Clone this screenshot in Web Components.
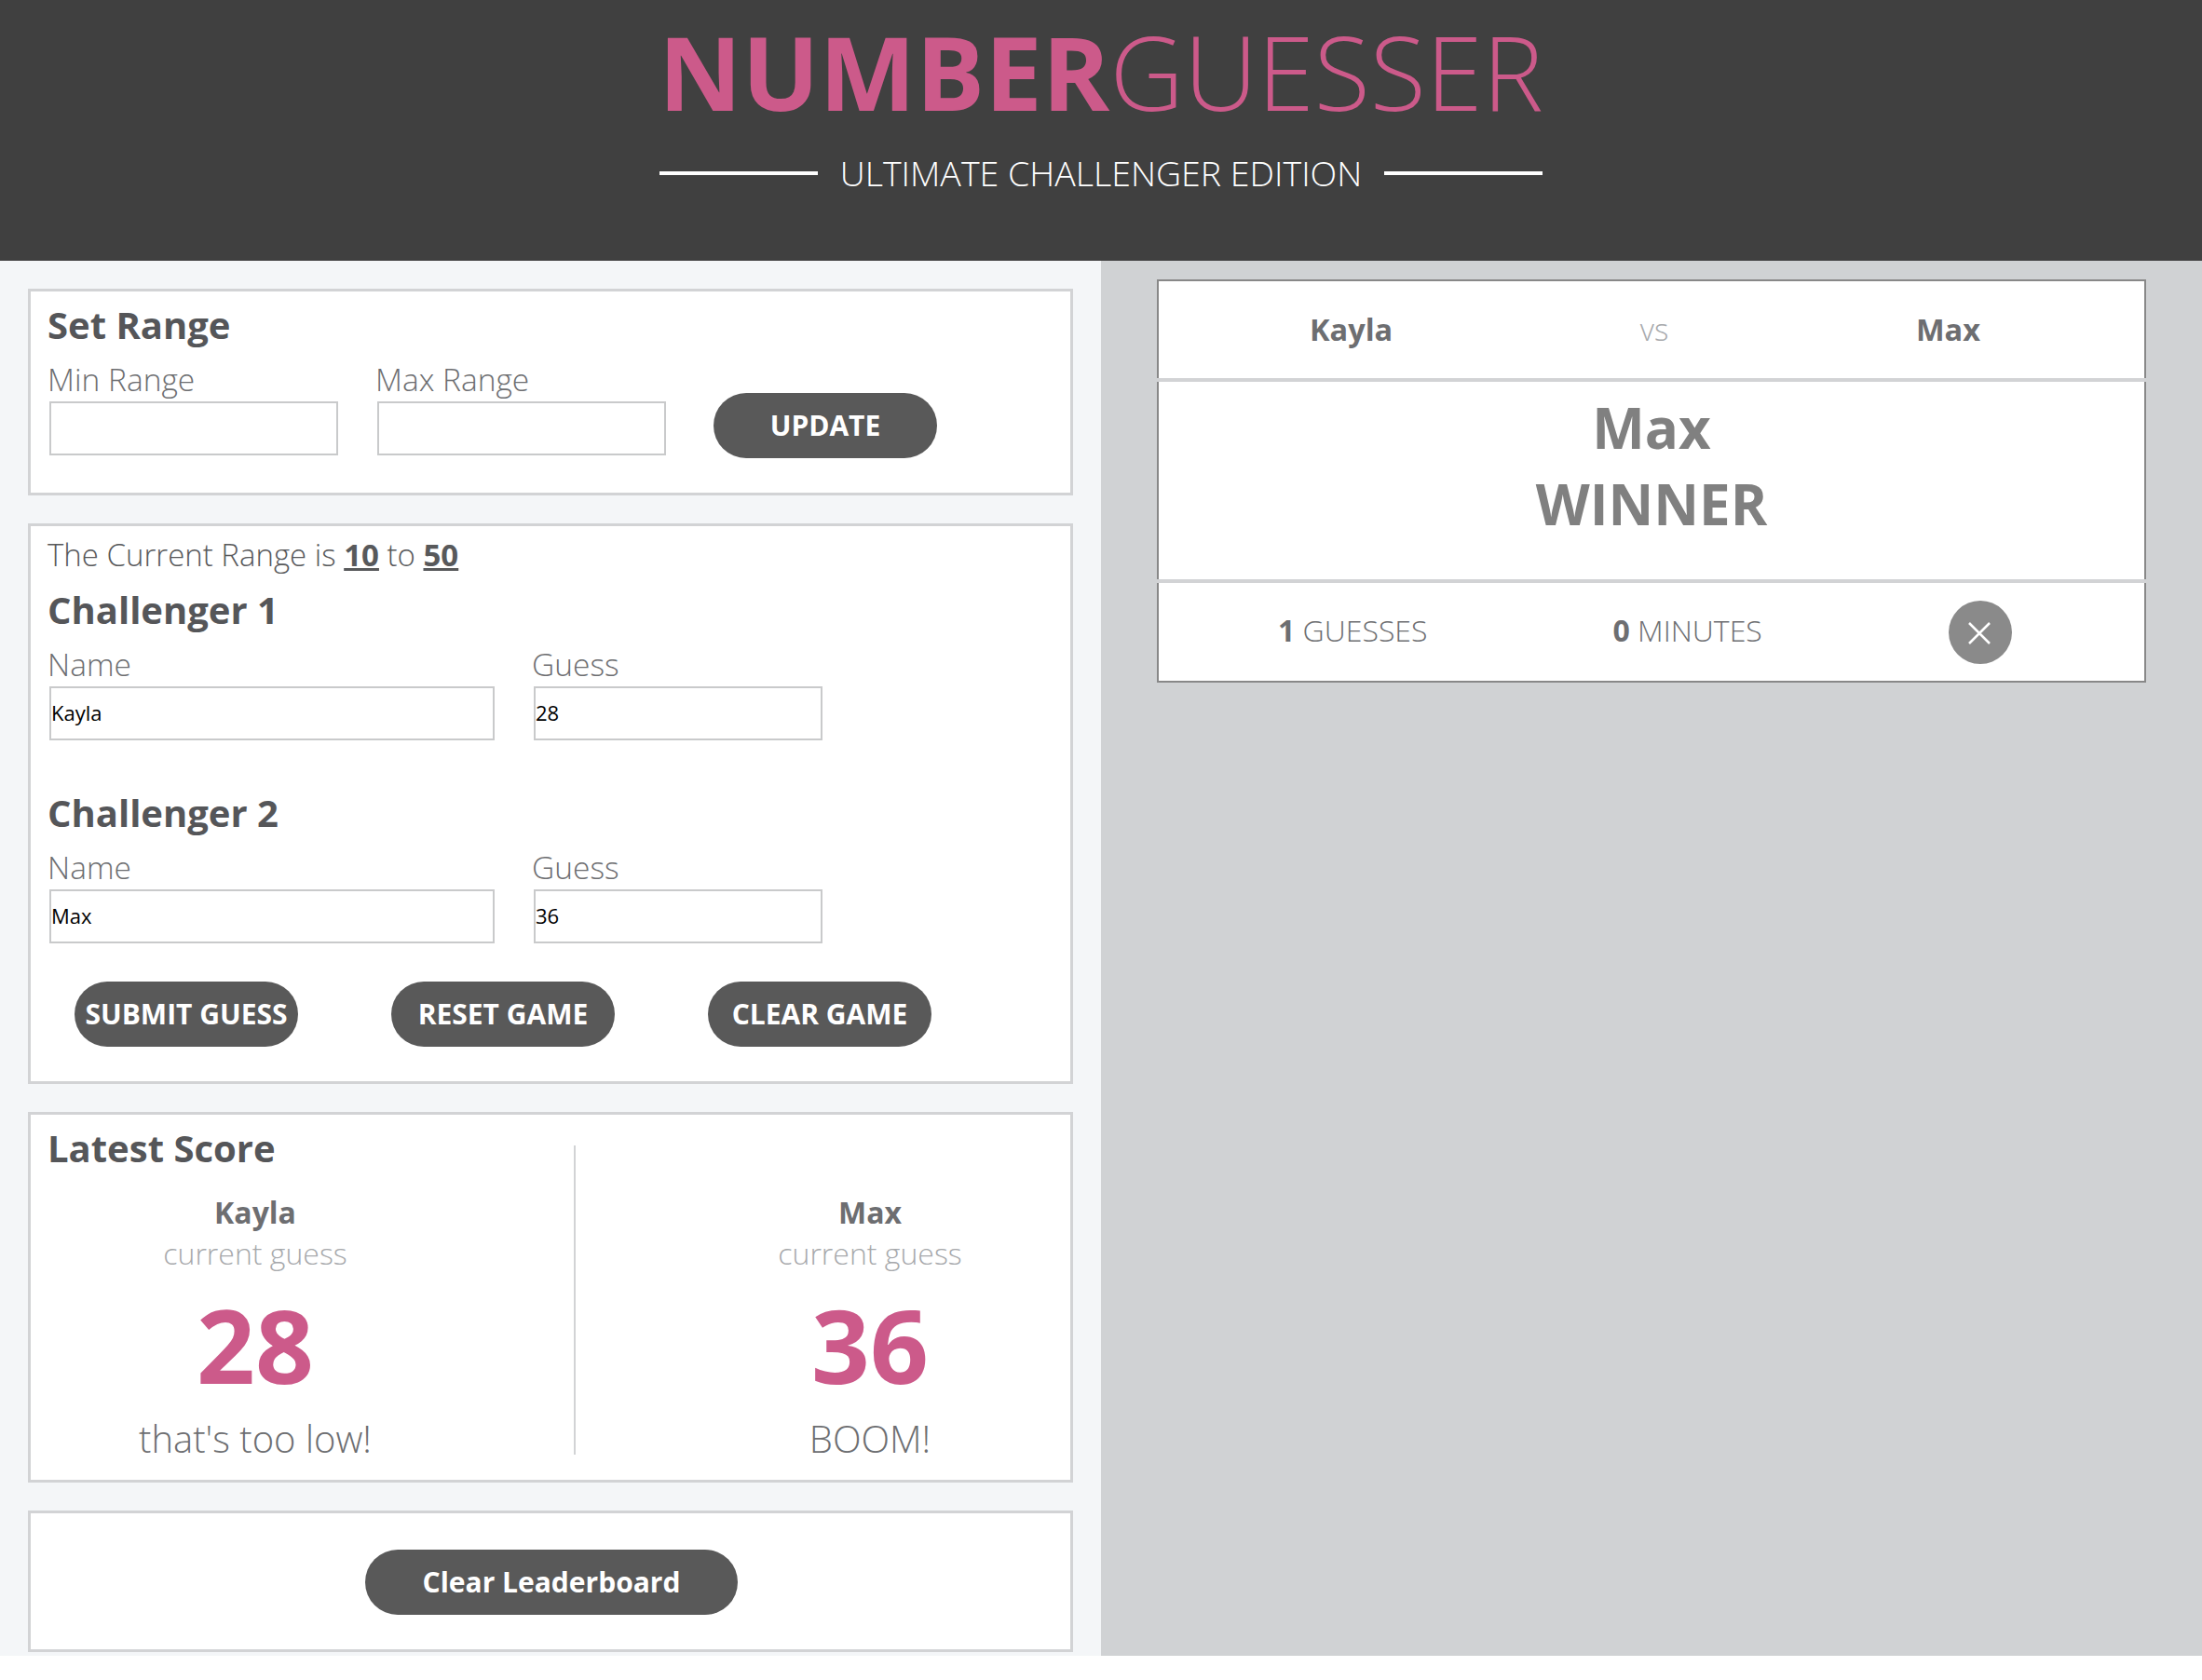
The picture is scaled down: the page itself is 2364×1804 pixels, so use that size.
<!DOCTYPE html>
<html>
<head>
<meta charset="utf-8">
<title>Number Guesser</title>
<style>
  html, body { margin: 0; background: #fff; }
  body { font-family: "Open Sans", sans-serif; }
  .page { display: flex; align-items: stretch; }
  .left { width: 1182px; background: #f4f6f8; box-sizing: border-box; padding: 30px 30px 4px; display: flex; flex-direction: column; gap: 30px; }
  .right { width: 1182px; background: #d0d2d4; box-sizing: border-box; padding: 20px 60px; }
</style>
</head>
<body>
<ng-header></ng-header>
<div class="page">
  <div class="left">
    <ng-card style="height:222px">
      <range-form></range-form>
    </ng-card>
    <ng-card style="height:602px">
      <challenger-form></challenger-form>
    </ng-card>
    <ng-card style="height:398px">
      <latest-score></latest-score>
    </ng-card>
    <ng-card style="height:152px">
      <leader-clear></leader-clear>
    </ng-card>
  </div>
  <div class="right">
    <game-card></game-card>
  </div>
</div>

<script>
  // Shared text rules, every shadow root gets them
  const base = `
    * { box-sizing: border-box; }
    h2 { margin: 0; font: 700 40px/50px "Open Sans", sans-serif; color: #555659; }
  `;

  class NgHeader extends HTMLElement {
    constructor() {
      super();
      this.attachShadow({ mode: 'open' });
      this.shadowRoot.innerHTML = `
        <style>
          :host { display: block; height: 280px; background: #404040; padding-top: 20px; box-sizing: border-box; }
          h1 { margin: 0; text-align: center; font: 300 110px/112px "Open Sans", sans-serif; color: #cc5a8a; }
          h1 b { font-weight: 700; }
          .sub { display: flex; justify-content: center; align-items: center; gap: 24px; margin-top: 29px; height: 50px; }
          .sub span { font: 300 37.5px/50px "Open Sans", sans-serif; color: #fff; }
          .sub i { display: block; width: 170px; height: 4px; background: #fff; }
        </style>
        <h1><b>NUMBER</b>GUESSER</h1>
        <div class="sub"><i></i><span>ULTIMATE CHALLENGER EDITION</span><i></i></div>
      `;
    }
  }
  customElements.define('ng-header', NgHeader);

  class NgCard extends HTMLElement {
    constructor() {
      super();
      this.attachShadow({ mode: 'open' });
      this.shadowRoot.innerHTML = `
        <style>
          :host { display: block; background: #fff; border: 3px solid #d2d3d5; box-sizing: border-box; }
        </style>
        <slot></slot>
      `;
    }
  }
  customElements.define('ng-card', NgCard);

  // label + fake input box, the value goes in the slot
  class NgField extends HTMLElement {
    constructor() {
      super();
      this.attachShadow({ mode: 'open' });
      this.shadowRoot.innerHTML = `
        <style>
          :host { display: block; width: var(--w, 312px); }
          label { display: block; font: 300 33.5px/40px "Open Sans", sans-serif; color: #6d6e71; }
          .box { box-sizing: border-box; margin: 4px 0 0 2px; height: 58px; border: 2px solid #c9cacb; background: #fff;
                 font: 400 22px/52px "Open Sans", sans-serif; color: #000; }
        </style>
        <label></label>
        <div class="box"><slot></slot></div>
      `;
      this.shadowRoot.querySelector('label').textContent = this.getAttribute('label');
    }
  }
  customElements.define('ng-field', NgField);

  class NgButton extends HTMLElement {
    constructor() {
      super();
      this.attachShadow({ mode: 'open' });
      this.shadowRoot.innerHTML = `
        <style>
          :host { display: block; width: var(--w, 240px); height: 70px; border-radius: 35px; background: #595959;
                  color: #fff; font: 700 30px/70px "Open Sans", sans-serif; text-align: center; white-space: nowrap; flex: none; }
        </style>
        <slot></slot>
      `;
    }
  }
  customElements.define('ng-button', NgButton);

  class RangeForm extends HTMLElement {
    constructor() {
      super();
      this.attachShadow({ mode: 'open' });
      this.shadowRoot.innerHTML = `
        <style>
          ${base}
          :host { display: block; padding: 11px 0 0 18px; }
          .row { display: flex; margin-top: 13px; }
          ng-field + ng-field { margin-left: 40px; }
          ng-button { margin: 35px 0 0 51px; }
        </style>
        <h2>Set Range</h2>
        <div class="row">
          <ng-field label="Min Range"></ng-field>
          <ng-field label="Max Range"></ng-field>
          <ng-button>UPDATE</ng-button>
        </div>
      `;
    }
  }
  customElements.define('range-form', RangeForm);

  class ChallengerForm extends HTMLElement {
    constructor() {
      super();
      this.attachShadow({ mode: 'open' });
      this.shadowRoot.innerHTML = `
        <style>
          ${base}
          :host { display: block; padding: 11px 0 0 18px; }
          p { margin: 0 0 14px; font: 300 33px/40px "Open Sans", sans-serif; color: #58595b; }
          p b { text-decoration: underline; font-weight: 700; }
          .row { display: flex; gap: 40px; margin-top: 13px; }
          .name { --w: 480px; }
          .second { margin-top: 53px; }
          .buttons { display: flex; gap: 100px; margin: 41px 0 0 29px; }
        </style>
        <p>The Current Range is <b>10</b> to <b>50</b></p>
        <h2>Challenger 1</h2>
        <div class="row">
          <ng-field class="name" label="Name">Kayla</ng-field>
          <ng-field label="Guess">28</ng-field>
        </div>
        <h2 class="second">Challenger 2</h2>
        <div class="row">
          <ng-field class="name" label="Name">Max</ng-field>
          <ng-field label="Guess">36</ng-field>
        </div>
        <div class="buttons">
          <ng-button>SUBMIT GUESS</ng-button>
          <ng-button>RESET GAME</ng-button>
          <ng-button>CLEAR GAME</ng-button>
        </div>
      `;
    }
  }
  customElements.define('challenger-form', ChallengerForm);

  class ScorePanel extends HTMLElement {
    constructor() {
      super();
      this.attachShadow({ mode: 'open' });
      this.shadowRoot.innerHTML = `
        <style>
          :host { display: block; width: 400px; text-align: center; }
          .who { font: 700 32px/40px "Open Sans", sans-serif; color: #6d6e71; }
          .cur { margin-top: 4px; font: 300 32px/40px "Open Sans", sans-serif; color: #a7a9ac; }
          .num { margin-top: 21px; font: 700 110px/112px "Open Sans", sans-serif; color: #cc5a8a; }
          .msg { margin-top: 21px; font: 300 40px/50px "Open Sans", sans-serif; color: #6d6e71; }
        </style>
        <div class="who"></div>
        <div class="cur">current guess</div>
        <div class="num"></div>
        <div class="msg"></div>
      `;
      for (const k of ['who', 'num', 'msg']) {
        this.shadowRoot.querySelector('.' + k).textContent = this.getAttribute(k);
      }
    }
  }
  customElements.define('score-panel', ScorePanel);

  class LatestScore extends HTMLElement {
    constructor() {
      super();
      this.attachShadow({ mode: 'open' });
      this.shadowRoot.innerHTML = `
        <style>
          ${base}
          :host { display: flex; padding: 11px 0 0 18px; }
          .col { width: 565px; }
          .col score-panel { margin: 24px 0 0 23px; }
          .rule { width: 2px; height: 332px; margin-top: 22px; background: #d2d3d5; flex: none; }
          .rightcol { margin: 74px 0 0 116px; }
        </style>
        <div class="col">
          <h2>Latest Score</h2>
          <score-panel who="Kayla" num="28" msg="that's too low!"></score-panel>
        </div>
        <div class="rule"></div>
        <score-panel class="rightcol" who="Max" num="36" msg="BOOM!"></score-panel>
      `;
    }
  }
  customElements.define('latest-score', LatestScore);

  class LeaderClear extends HTMLElement {
    constructor() {
      super();
      this.attachShadow({ mode: 'open' });
      this.shadowRoot.innerHTML = `
        <style>
          :host { display: flex; justify-content: center; align-items: center; height: 146px; padding: 2px 0 0 2px; box-sizing: border-box; }
          ng-button { --w: 400px; }
        </style>
        <ng-button>Clear Leaderboard</ng-button>
      `;
    }
  }
  customElements.define('leader-clear', LeaderClear);

  class GameCard extends HTMLElement {
    constructor() {
      super();
      this.attachShadow({ mode: 'open' });
      this.shadowRoot.innerHTML = `
        <style>
          :host { display: block; height: 433px; background: #fff; border: 2px solid #888; box-sizing: border-box; color: #6d6e71; }
          .top { display: flex; height: 104px; padding: 32px 176px 0 162px; font: 700 32.5px/40px "Open Sans", sans-serif; box-sizing: border-box; justify-content: space-between; }
          .top span.vs { font-weight: 300; font-size: 33px; color: #a7a9ac; }
          hr { height: 4px; margin: 0 -2px; border: 0; background: #d2d3d5; }
          .mid { height: 212px; padding-top: 8px; box-sizing: border-box; text-align: center; font: 700 60px/82px "Open Sans", sans-serif; color: #808080; }
          .foot { display: flex; align-items: center; height: 105px; padding-left: 128px; gap: 199px; box-sizing: border-box; }
          .foot span { font: 300 32px/40px "Open Sans", sans-serif; margin-top: -4px; }
          .foot b { font-weight: 700; }
          .close { width: 68px; height: 68px; margin-left: 1px; border-radius: 50%; background: #8a8a8a; display: flex; align-items: center; justify-content: center; }
          .close svg { margin: 2px 1px 0 0; }
        </style>
        <div class="top"><span>Kayla</span><span class="vs">vs</span><span>Max</span></div>
        <hr>
        <div class="mid">Max<br>WINNER</div>
        <hr>
        <div class="foot">
          <span><b>1</b> GUESSES</span>
          <span><b>0</b> MINUTES</span>
          <div class="close">
            <svg width="24" height="24" viewBox="0 0 24 24"><path d="M1 1L23 23M23 1L1 23" stroke="#fff" stroke-width="2.5" fill="none"/></svg>
          </div>
        </div>
      `;
    }
  }
  customElements.define('game-card', GameCard);
</script>
</body>
</html>
